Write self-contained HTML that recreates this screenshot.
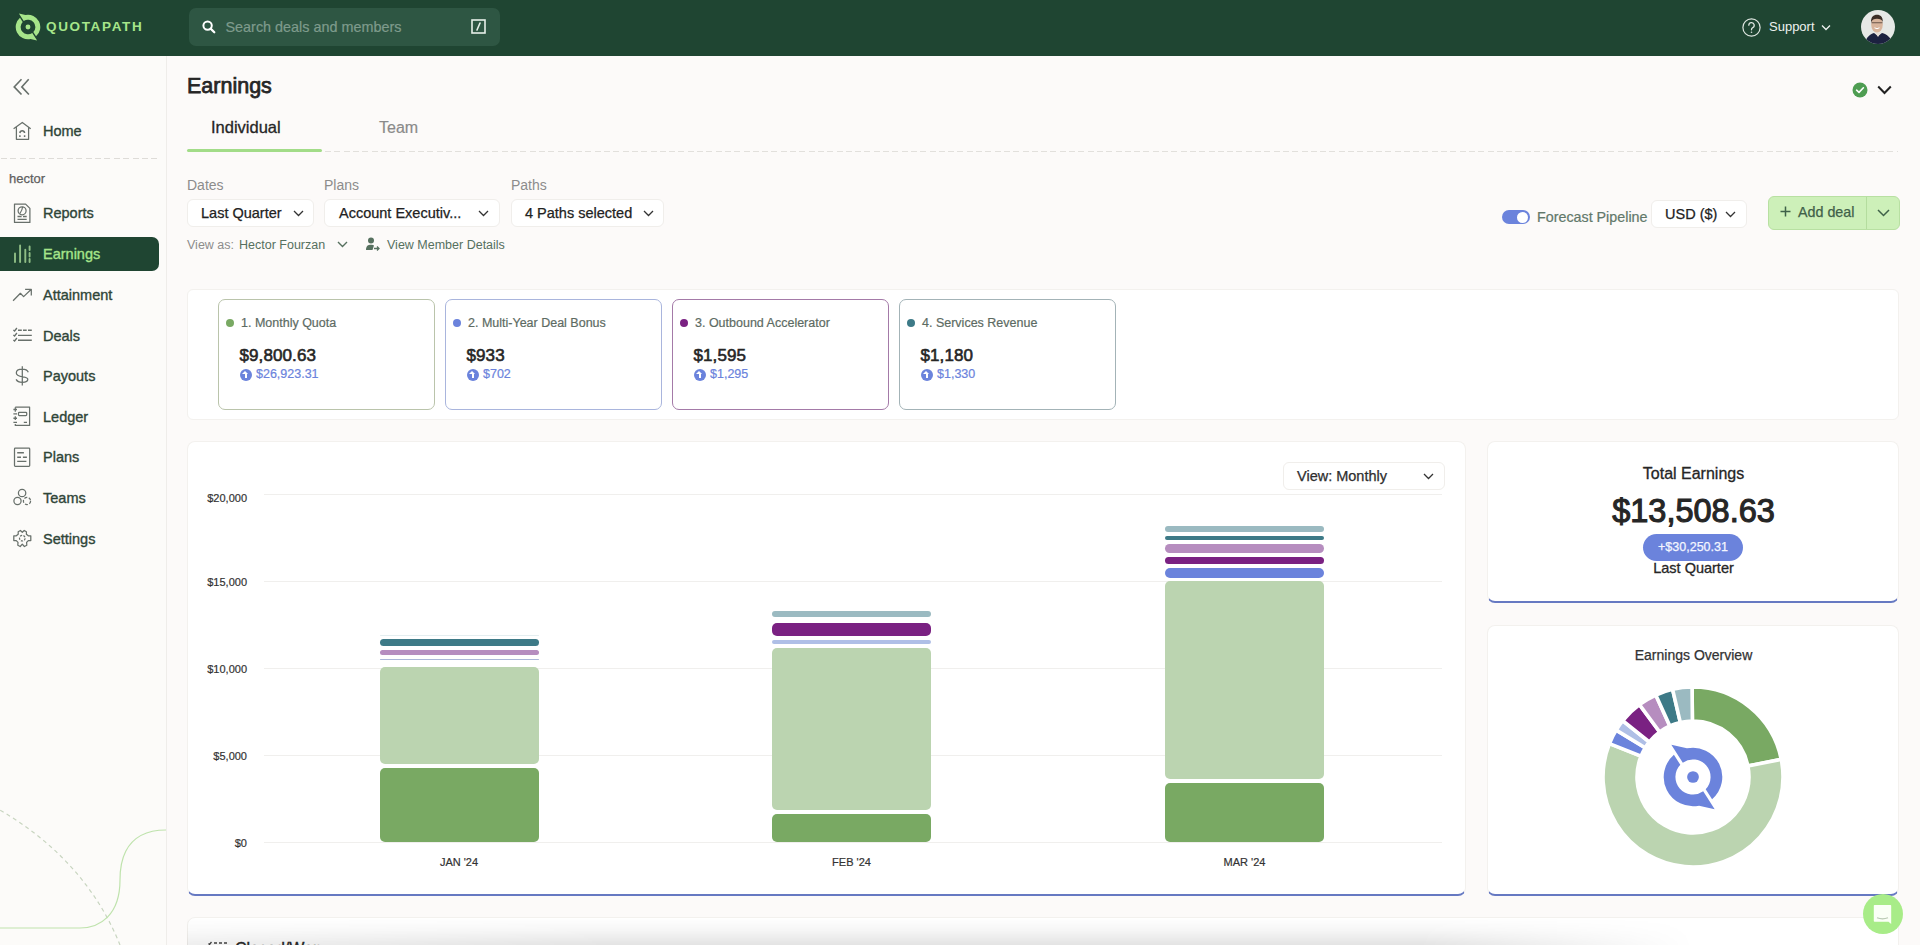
<!DOCTYPE html>
<html><head><meta charset="utf-8">
<style>
*{box-sizing:border-box;margin:0;padding:0}
html,body{width:1920px;height:945px;overflow:hidden;background:#fcfaf9;font-family:"Liberation Sans",sans-serif;color:#222}
.a{position:absolute;white-space:nowrap}
#top{position:absolute;left:0;top:0;width:1920px;height:56px;background:#1f4532}
#side{position:absolute;left:0;top:56px;width:167px;height:889px;background:#fcfbf9;border-right:1px solid #efedea}
.nav{position:absolute;left:43px;font-size:14.5px;color:#2f4538;-webkit-text-stroke:0.35px #2f4538}
.ico{position:absolute;left:12px}
.card{position:absolute;background:#fff;border:1px solid #f3f1ee;border-radius:8px}
.dd{position:absolute;background:#fff;border:1px solid #f0eeeb;border-radius:6px;height:28px}
.lbl{position:absolute;font-size:14px;color:#8c8c8c}
.ddt{position:absolute;font-size:14.5px;color:#222;top:5px;-webkit-text-stroke:0.25px #222}
.chev{position:absolute}
.pc{position:absolute;top:299px;width:217px;height:111px;border-radius:7px;background:#fff;border:1px solid}
.pc .dot{position:absolute;left:7px;top:19px;width:8px;height:8px;border-radius:50%}
.pc .t{position:absolute;left:22px;top:16px;font-size:12.5px;color:#5d6b63;-webkit-text-stroke:0.2px #5d6b63}
.pc .v{position:absolute;left:20.5px;top:46px;font-size:17px;color:#262626;-webkit-text-stroke:0.6px #262626;letter-spacing:0.1px}
.pc .u{position:absolute;left:20.5px;top:68.5px;width:12px;height:12px;border-radius:50%;background:#6b83dc}
.pc .u:after{content:"";position:absolute;left:2.8px;top:2.6px;width:0;height:0;border-left:3.2px solid transparent;border-right:3.2px solid transparent;border-bottom:3.6px solid #fff}
.pc .u:before{content:"";position:absolute;left:5px;top:5.5px;width:2px;height:3.5px;background:#fff}
.pc .s{position:absolute;left:37px;top:67px;font-size:12.5px;color:#6b83dc;-webkit-text-stroke:0.2px #6b83dc}
.yl{position:absolute;font-size:11px;color:#333;text-align:right;width:60px;left:187px;-webkit-text-stroke:0.2px #333}
.gl{position:absolute;left:264px;width:1178px;height:1px;background:#f0efed}
.bar{position:absolute;border-radius:5px}
.xl{position:absolute;font-size:11px;color:#333;text-align:center;width:100px;-webkit-text-stroke:0.2px #333}
</style></head><body>

<!-- TOP BAR -->
<div id="top">
  <svg class="a" style="left:13px;top:12px" width="30" height="30" viewBox="-1.22 -1.22 2.44 2.44"><path fill="#a6e58a" d="M-0.740 -1.100 L-0.208 -0.978 A1.0 1.0 0 0 1 0.652 0.758 L0.433 0.416 A0.6 0.6 0 0 0 -0.348 -0.488 Z"/><path fill="#a6e58a" d="M0.740 1.100 L0.208 0.978 A1.0 1.0 0 0 1 -0.652 -0.758 L-0.433 -0.416 A0.6 0.6 0 0 0 0.348 0.488 Z"/><circle r="0.2" fill="#a6e58a"/></svg>
  <div class="a" style="left:46px;top:19px;font-size:13.5px;font-weight:bold;letter-spacing:1.65px;color:#a6e58a">QUOTAPATH</div>
  <div class="a" style="left:189px;top:8px;width:311px;height:38px;border-radius:7px;background:#2e5643"></div>
  <svg class="a" style="left:202px;top:20px" width="14" height="14" viewBox="0 0 14 14"><circle cx="5.6" cy="5.6" r="4.2" fill="none" stroke="#fff" stroke-width="2"/><path d="M8.6 8.6 L12.3 12.3" stroke="#fff" stroke-width="2.2" stroke-linecap="round"/></svg>
  <div class="a" style="left:225.5px;top:18.5px;font-size:14.4px;color:#7e9b8c;-webkit-text-stroke:0.2px #7e9b8c">Search deals and members</div>
  <svg class="a" style="left:471px;top:19px" width="15" height="15" viewBox="0 0 15 15"><rect x="1" y="1" width="13" height="13" fill="none" stroke="#e6efe9" stroke-width="1.6"/><path d="M9 4 L6 11" stroke="#e6efe9" stroke-width="1.6" stroke-linecap="round"/></svg>
  <svg class="a" style="left:1742px;top:18px" width="19" height="19" viewBox="0 0 19 19"><circle cx="9.5" cy="9.5" r="8.6" fill="none" stroke="#dfe6e1" stroke-width="1.2"/><path d="M6.8 7.2 A2.7 2.7 0 1 1 10.4 9.8 C9.6 10.2 9.5 10.8 9.5 11.8" fill="none" stroke="#dfe6e1" stroke-width="1.3" stroke-linecap="round"/><circle cx="9.5" cy="14.2" r="0.8" fill="#dfe6e1"/></svg>
  <div class="a" style="left:1769px;top:19px;font-size:13px;color:#eef2ef">Support</div>
  <svg class="a" style="left:1821px;top:24px" width="10" height="7" viewBox="0 0 10 7"><path d="M1 1.5 L5 5.5 L9 1.5" fill="none" stroke="#eef2ef" stroke-width="1.3"/></svg>
  <svg class="a" style="left:1861px;top:10px" width="34" height="34" viewBox="0 0 34 34"><defs><clipPath id="av"><circle cx="17" cy="17" r="17"/></clipPath></defs><g clip-path="url(#av)"><rect width="34" height="34" fill="#e6e8e6"/><path d="M4 34 C5 27 9 24.5 13 23 L17 26 L21 23 C26 24.5 30 27 31 34 Z" fill="#1c2140"/><path d="M14 22.5 L17 27 L20 22.5 Z" fill="#e8dcd4"/><ellipse cx="16" cy="14.5" rx="5.8" ry="8" fill="#d8b49c"/><path d="M10 12.5 C9.8 7 12.5 4.8 16 4.8 C19.5 4.8 22 7 21.8 12 C21 9.5 19 8.7 16 8.7 C13 8.7 11 9.5 10 12.5 Z" fill="#3b2d26"/><path d="M10.5 12.8 H21.5" stroke="#6a5548" stroke-width="1.1"/><path d="M13.5 17.8 Q16 19.6 18.5 17.8" fill="none" stroke="#fff" stroke-width="1"/></g></svg>
</div>

<!-- SIDEBAR -->
<div id="side"></div>
<svg class="a" style="left:0;top:0;z-index:2" width="167" height="560" viewBox="0 0 167 560" fill="none" stroke="#68706b" stroke-width="1.25">
<path d="M21.5 79.3 L14.2 86.9 L21.5 94.5 M28.7 79.3 L21.8 86.9 L28.9 94.5" stroke-width="1.6"/>
<path d="M13.6 128.7 L22.3 122.5 L30.7 128.7 M16.4 127 V139.3 H28.6 V127" stroke-linejoin="round"/>
<path d="M19.8 133 Q20.2 130.8 22.2 130.8 Q24.3 130.8 24.6 133 M19.9 135.3 V137 M24.6 135.3 V137" stroke-width="1.5"/>
<path d="M14.5 204.1 H25.6 L29.9 208.4 V222.4 H14.5 Z" stroke-linejoin="round"/>
<circle cx="22.1" cy="210.8" r="4"/><path d="M22.6 206.9 Q22.4 210 19.8 213.6" stroke-width="1.1"/>
<path d="M17.5 216.5 H21.6 M23 216.5 H26.7 M17.5 219.4 H26.7" stroke-width="1.4"/>
<g stroke="#8fbd85" stroke-width="1.9" stroke-linecap="round"><path d="M15 253.5 V262 M20.1 245.5 V262 M25.3 249.8 V262"/><path d="M29.6 246.5 V250 M29.6 253 V256.5 M29.6 259 V262"/></g>
<path d="M13.1 300.7 L20.4 293.3 L23.6 296.6 L31.3 289.3 M25.1 289.3 H31.3 V295.5" stroke-linejoin="round"/>
<path d="M13.4 330 L14.6 331 L16.9 328 M13.4 335 L14.6 336 L16.9 333 M13.4 340 L14.6 341 L16.9 338" stroke-width="1.3"/>
<path d="M18 330.2 H21.8 M23 330.2 H26.7 M28 330.2 H31.8 M18 335.4 H31.8 M18 340.3 H31.8" stroke-width="1.4"/>
<path d="M22.3 366.2 V385.4 M28.3 372.2 C27.3 370 25 369.2 22.3 369.2 C18.5 369.2 16.3 370.8 16.3 373 C16.3 378.2 27.8 375.5 27.8 379.2 C27.8 381.3 25.3 382.3 22.3 382.3 C19.2 382.3 17 381.2 16.1 379.4"/>
<path d="M15.3 407.2 H29.6 V425.4 H15.3 V424 M15.3 420 V416.2 M15.3 411.8 V407.2" stroke-linejoin="round"/>
<path d="M13.4 409.5 H17 M13.4 413.9 H17 M13.4 418.3 H17 M13.4 422.4 H17 M23.8 422.4 H27" stroke-width="1.4"/>
<rect x="18.5" y="412.3" width="8.2" height="3.3" rx="0.8"/>
<rect x="14.5" y="448.2" width="15.2" height="18.2" rx="0.8"/>
<path d="M17.2 452.8 H23.9 M17.2 457.2 H21 M22.9 457.2 H26.9 M17.2 461.4 H26.4" stroke-width="1.4"/>
<circle cx="22.1" cy="493" r="3.7"/><circle cx="17.5" cy="501" r="3.6"/><circle cx="27" cy="501" r="3.6" stroke-dasharray="3 1.6"/>
<path d="M20.4 530.5 L22.3 532.3 L24.2 530.5 L26.4 531.8 L26.4 534.2 L28.3 535.8 L30.8 535.8 L30.8 540.6 L28.3 540.6 L26.6 542.4 L26.8 545.3 L24.4 546.5 L22.3 544.2 L20.2 546.5 L17.8 545.3 L18 542.4 L16.3 540.6 L13.8 540.6 L13.8 535.8 L16.3 535.8 L18.2 534.2 L18.2 531.8 Z" stroke-linejoin="round"/>
<circle cx="22.3" cy="538.2" r="2.8" stroke-dasharray="2.2 1.3" stroke-width="1.2"/>
</svg>
<div class="nav" style="top:123px">Home</div>
<div class="a" style="left:0;top:158px;width:159px;height:1.2px;background:repeating-linear-gradient(to right,transparent 0,transparent 1px,#dedcd8 1px,#dedcd8 7px,transparent 7px,transparent 9.4px)"></div>
<div class="a" style="left:9px;top:171px;font-size:13px;color:#606060;-webkit-text-stroke:0.25px #606060">hector</div>
<div class="nav" style="top:205px">Reports</div>
<div class="a" style="left:0;top:237px;width:159px;height:34px;background:#1f4532;border-radius:0 7px 7px 0"></div>
<div class="nav" style="top:246px;color:#a6e58a;-webkit-text-stroke-color:#a6e58a">Earnings</div>
<div class="nav" style="top:287px">Attainment</div>
<div class="nav" style="top:328px">Deals</div>
<div class="nav" style="top:368px">Payouts</div>
<div class="nav" style="top:409px">Ledger</div>
<div class="nav" style="top:449px">Plans</div>
<div class="nav" style="top:490px">Teams</div>
<div class="nav" style="top:531px">Settings</div>
<svg class="a" style="left:0;top:800px" width="167" height="145" viewBox="0 0 167 145"><path d="M-40 -10 C30 20 90 70 120 145" fill="none" stroke="#c8d5c0" stroke-width="1.2" stroke-dasharray="4 3.5"/><path d="M166 30 C120 30 120 70 120 80 C120 115 100 128 80 128 H0" fill="none" stroke="#bfe3ad" stroke-width="1.2"/></svg>

<!-- MAIN HEADER -->
<div class="a" style="left:187px;top:73.5px;font-size:21.5px;color:#262626;-webkit-text-stroke:0.75px #262626">Earnings</div>
<svg class="a" style="left:1852px;top:82px" width="16" height="16" viewBox="0 0 16 16"><circle cx="8" cy="8" r="7.5" fill="#4e9d52"/><path d="M4.6 8.2 L7 10.4 L11.4 5.8" fill="none" stroke="#fff" stroke-width="1.6" stroke-linecap="round" stroke-linejoin="round"/></svg>
<svg class="a" style="left:1877px;top:85px" width="15" height="10" viewBox="0 0 15 10"><path d="M1.2 1.5 L7.5 8 L13.8 1.5" fill="none" stroke="#222" stroke-width="2"/></svg>
<div class="a" style="left:211px;top:118px;font-size:16.5px;color:#262626;-webkit-text-stroke:0.3px #262626">Individual</div>
<div class="a" style="left:379px;top:119px;font-size:16px;color:#8a8a8a;-webkit-text-stroke:0.2px #8a8a8a">Team</div>
<div class="a" style="left:325px;top:151px;width:1573px;height:1.2px;background:repeating-linear-gradient(to right,#e2e0dc 0,#e2e0dc 6px,transparent 6px,transparent 9.3px)"></div>
<div class="a" style="left:187px;top:148.5px;width:135px;height:3px;background:#a2dc88;border-radius:2px"></div>

<!-- FILTERS -->
<div class="lbl" style="left:187px;top:177px">Dates</div>
<div class="lbl" style="left:324px;top:177px">Plans</div>
<div class="lbl" style="left:511px;top:177px">Paths</div>
<div class="dd" style="left:187px;top:199px;width:127px"><div class="ddt" style="left:13px">Last Quarter</div>
<svg class="chev" style="left:105px;top:10px" width="11" height="7" viewBox="0 0 11 7"><path d="M1 1 L5.5 5.5 L10 1" fill="none" stroke="#333" stroke-width="1.3"/></svg></div>
<div class="dd" style="left:324px;top:199px;width:176px"><div class="ddt" style="left:14px">Account Executiv...</div>
<svg class="chev" style="left:153px;top:10px" width="11" height="7" viewBox="0 0 11 7"><path d="M1 1 L5.5 5.5 L10 1" fill="none" stroke="#333" stroke-width="1.3"/></svg></div>
<div class="dd" style="left:511px;top:199px;width:153px"><div class="ddt" style="left:13px">4 Paths selected</div>
<svg class="chev" style="left:131px;top:10px" width="11" height="7" viewBox="0 0 11 7"><path d="M1 1 L5.5 5.5 L10 1" fill="none" stroke="#333" stroke-width="1.3"/></svg></div>
<div class="a" style="left:187px;top:238px;font-size:12.5px;color:#8c8c8c">View as:</div>
<div class="a" style="left:239px;top:238px;font-size:12.5px;color:#56705f">Hector Fourzan</div>
<svg class="a" style="left:337px;top:241px" width="11" height="7" viewBox="0 0 11 7"><path d="M1 1 L5.5 5.5 L10 1" fill="none" stroke="#56705f" stroke-width="1.4"/></svg>
<svg class="a" style="left:365px;top:237px" width="15" height="14" viewBox="0 0 15 14"><circle cx="6" cy="3.6" r="3" fill="#56705f"/><path d="M1 13 C1 9 3 7.8 6 7.8 C7.5 7.8 8.5 8.2 9 8.6 L7.5 13 Z" fill="#56705f"/><path d="M9 11.5 H14 M12 9.5 L14 11.5 L12 13.5" fill="none" stroke="#56705f" stroke-width="1.3"/></svg>
<div class="a" style="left:387px;top:238px;font-size:12.5px;color:#56705f">View Member Details</div>

<!-- RIGHT CONTROLS -->
<div class="a" style="left:1502px;top:210px;width:28px;height:14px;border-radius:7px;background:#6b83dc"></div>
<div class="a" style="left:1517px;top:211.5px;width:11px;height:11px;border-radius:50%;background:#fff"></div>
<div class="a" style="left:1537px;top:209px;font-size:14.3px;color:#62786a;-webkit-text-stroke:0.2px #62786a">Forecast Pipeline</div>
<div class="dd" style="left:1651px;top:200px;width:96px"><div class="ddt" style="left:13px">USD ($)</div>
<svg class="chev" style="left:73px;top:10px" width="11" height="7" viewBox="0 0 11 7"><path d="M1 1 L5.5 5.5 L10 1" fill="none" stroke="#333" stroke-width="1.3"/></svg></div>
<div class="a" style="left:1768px;top:196px;width:132px;height:34px;border-radius:6px;background:#cdf0b9;border:1px solid #b8e0a2"></div>
<div class="a" style="left:1866px;top:197px;width:1px;height:32px;background:#b4dd9e"></div>
<svg class="a" style="left:1780px;top:206px" width="11" height="11" viewBox="0 0 11 11"><path d="M5.5 0.5 V10.5 M0.5 5.5 H10.5" stroke="#3f6149" stroke-width="1.5"/></svg>
<div class="a" style="left:1798px;top:204px;font-size:14.3px;color:#3f6149;-webkit-text-stroke:0.25px #3f6149">Add deal</div>
<svg class="a" style="left:1877px;top:209px" width="13" height="8" viewBox="0 0 13 8"><path d="M1 1 L6.5 6.5 L12 1" fill="none" stroke="#3f6149" stroke-width="1.5"/></svg>

<!-- PLAN CARDS -->
<div class="card" style="left:187px;top:289px;width:1712px;height:131px;border-radius:6px"></div>
<div class="pc" style="left:218px;border-color:#bac4ab"><div class="dot" style="background:#79a963"></div><div class="t">1. Monthly Quota</div><div class="v">$9,800.63</div><div class="u"></div><div class="s">$26,923.31</div></div>
<div class="pc" style="left:445px;border-color:#a9b5dd"><div class="dot" style="background:#6b83dc"></div><div class="t">2. Multi-Year Deal Bonus</div><div class="v">$933</div><div class="u"></div><div class="s">$702</div></div>
<div class="pc" style="left:672px;border-color:#a47aa8"><div class="dot" style="background:#7a2182"></div><div class="t">3. Outbound Accelerator</div><div class="v">$1,595</div><div class="u"></div><div class="s">$1,295</div></div>
<div class="pc" style="left:899px;border-color:#a3b3b7"><div class="dot" style="background:#3d7a87"></div><div class="t">4. Services Revenue</div><div class="v">$1,180</div><div class="u"></div><div class="s">$1,330</div></div>

<!-- CHART CARD -->
<div class="card" style="left:187px;top:441px;width:1279px;height:455px;border-bottom:2.5px solid #6679c2"></div>
<div class="dd" style="left:1283px;top:462px;width:162px"><div class="ddt" style="left:13px;color:#333">View: Monthly</div>
<svg class="chev" style="left:139px;top:10px" width="11" height="7" viewBox="0 0 11 7"><path d="M1 1 L5.5 5.5 L10 1" fill="none" stroke="#333" stroke-width="1.3"/></svg></div>
<div class="gl" style="top:494px"></div>
<div class="gl" style="top:581px"></div>
<div class="gl" style="top:668px"></div>
<div class="gl" style="top:755px"></div>
<div class="gl" style="top:842px"></div>
<div class="yl" style="top:492px">$20,000</div>
<div class="yl" style="top:576px">$15,000</div>
<div class="yl" style="top:663px">$10,000</div>
<div class="yl" style="top:750px">$5,000</div>
<div class="yl" style="top:837px">$0</div>

<!-- JAN -->
<div class="bar" style="left:379.5px;top:635px;width:159px;height:1px;background:#e4eef0;border-radius:1px"></div>
<div class="bar" style="left:379.5px;top:639px;width:159px;height:7px;background:#3d7a87"></div>
<div class="bar" style="left:379.5px;top:650px;width:159px;height:5px;background:#b68dbf"></div>
<div class="bar" style="left:379.5px;top:658.5px;width:159px;height:1.7px;background:#aab7d8"></div>
<div class="bar" style="left:379.5px;top:667px;width:159px;height:97px;background:#bbd4b0"></div>
<div class="bar" style="left:379.5px;top:768px;width:159px;height:73.5px;background:#79a963"></div>
<div class="xl" style="left:409px;top:856px">JAN '24</div>
<!-- FEB -->
<div class="bar" style="left:772px;top:611px;width:159px;height:5.5px;background:#9bbac1"></div>
<div class="bar" style="left:772px;top:623px;width:159px;height:13px;background:#7a2182"></div>
<div class="bar" style="left:772px;top:640px;width:159px;height:3.5px;background:#afbfe6"></div>
<div class="bar" style="left:772px;top:647.5px;width:159px;height:162px;background:#bbd4b0"></div>
<div class="bar" style="left:772px;top:814px;width:159px;height:27.5px;background:#79a963"></div>
<div class="xl" style="left:801.5px;top:856px">FEB '24</div>
<!-- MAR -->
<div class="bar" style="left:1165px;top:526px;width:159px;height:6px;background:#9bbac1"></div>
<div class="bar" style="left:1165px;top:536px;width:159px;height:3.7px;background:#3d7a87"></div>
<div class="bar" style="left:1165px;top:544px;width:159px;height:9px;background:#b68dbf"></div>
<div class="bar" style="left:1165px;top:557px;width:159px;height:7px;background:#7a2182"></div>
<div class="bar" style="left:1165px;top:568px;width:159px;height:9.5px;background:#6b83dc"></div>
<div class="bar" style="left:1165px;top:581px;width:159px;height:197.5px;background:#bbd4b0"></div>
<div class="bar" style="left:1165px;top:783px;width:159px;height:58.5px;background:#79a963"></div>
<div class="xl" style="left:1194.5px;top:856px">MAR '24</div>

<!-- TOTAL EARNINGS -->
<div class="card" style="left:1487px;top:441px;width:412px;height:162px;border-bottom:2.5px solid #6679c2"></div>
<div class="a" style="left:1488px;top:465px;width:411px;text-align:center;font-size:16px;color:#262626;-webkit-text-stroke:0.3px #262626">Total Earnings</div>
<div class="a" style="left:1488px;top:493px;width:411px;text-align:center;font-size:32.5px;color:#262626;-webkit-text-stroke:1.1px #262626">$13,508.63</div>
<div class="a" style="left:1643px;top:534px;width:100px;height:27px;border-radius:14px;background:#6b83dc;color:#f4f6ff;font-size:12.5px;text-align:center;line-height:27px;-webkit-text-stroke:0.25px #f4f6ff">+$30,250.31</div>
<div class="a" style="left:1488px;top:560px;width:411px;text-align:center;font-size:14.5px;color:#262626;-webkit-text-stroke:0.3px #262626">Last Quarter</div>

<!-- EARNINGS OVERVIEW -->
<div class="card" style="left:1487px;top:625px;width:412px;height:271px;border-bottom:2.5px solid #6679c2"></div>
<div class="a" style="left:1488px;top:647px;width:411px;text-align:center;font-size:14px;color:#333;-webkit-text-stroke:0.25px #333">Earnings Overview</div>
<svg id="donut" class="a" style="left:1593px;top:677px" width="200" height="200" viewBox="-100 -100 200 200"><path d="M-0.94 -90.00 A90 90 0 0 1 88.26 -17.64 L54.91 -10.97 A56 56 0 0 0 -0.59 -56.00 Z" fill="#79a963" stroke="#fff" stroke-width="3.6" stroke-linejoin="miter"/><path d="M88.26 -17.64 A90 90 0 1 1 -83.56 -33.42 L-52.00 -20.80 A56 56 0 1 0 54.91 -10.97 Z" fill="#bbd4b0" stroke="#fff" stroke-width="3.6" stroke-linejoin="miter"/><path d="M-83.56 -33.42 A90 90 0 0 1 -76.82 -46.89 L-47.80 -29.18 A56 56 0 0 0 -52.00 -20.80 Z" fill="#6b83dc" stroke="#fff" stroke-width="3.6" stroke-linejoin="miter"/><path d="M-76.82 -46.89 A90 90 0 0 1 -70.24 -56.27 L-43.70 -35.01 A56 56 0 0 0 -47.80 -29.18 Z" fill="#afbfe6" stroke="#fff" stroke-width="3.6" stroke-linejoin="miter"/><path d="M-70.24 -56.27 A90 90 0 0 1 -53.53 -72.35 L-33.31 -45.02 A56 56 0 0 0 -43.70 -35.01 Z" fill="#7a2182" stroke="#fff" stroke-width="3.6" stroke-linejoin="miter"/><path d="M-53.53 -72.35 A90 90 0 0 1 -37.18 -81.96 L-23.13 -51.00 A56 56 0 0 0 -33.31 -45.02 Z" fill="#b68dbf" stroke="#fff" stroke-width="3.6" stroke-linejoin="miter"/><path d="M-37.18 -81.96 A90 90 0 0 1 -20.40 -87.66 L-12.69 -54.54 A56 56 0 0 0 -23.13 -51.00 Z" fill="#3d7a87" stroke="#fff" stroke-width="3.6" stroke-linejoin="miter"/><path d="M-20.40 -87.66 A90 90 0 0 1 -0.94 -90.00 L-0.59 -56.00 A56 56 0 0 0 -12.69 -54.54 Z" fill="#9bbac1" stroke="#fff" stroke-width="3.6" stroke-linejoin="miter"/><g transform="scale(29.3)"><path fill="#6b83dc" d="M-0.740 -1.100 L-0.208 -0.978 A1.0 1.0 0 0 1 0.652 0.758 L0.433 0.416 A0.6 0.6 0 0 0 -0.348 -0.488 Z"/><path fill="#6b83dc" d="M0.740 1.100 L0.208 0.978 A1.0 1.0 0 0 1 -0.652 -0.758 L-0.433 -0.416 A0.6 0.6 0 0 0 0.348 0.488 Z"/><circle r="0.2" fill="#6b83dc"/></g></svg>

<!-- BOTTOM CARD + FADE -->
<div class="card" style="left:187px;top:917px;width:1712px;height:80px"></div>
<svg class="a" style="left:208px;top:941px" width="20" height="10" viewBox="0 0 20 10"><path d="M0.5 2.5 L1.5 3.5 L3.5 1 M6 2 H9 M11 2 H14 M16 2 H19" fill="none" stroke="#444" stroke-width="1.3"/></svg>
<div class="a" style="left:235px;top:939.5px;font-size:16px;color:#262626;-webkit-text-stroke:0.4px #262626">Closed/Won</div>
<div class="a" style="left:187px;top:918px;width:1712px;height:27px;background:linear-gradient(to bottom,rgba(0,0,0,0) 0%,rgba(0,0,0,0.035) 45%,rgba(0,0,0,0.11) 100%);-webkit-mask-image:linear-gradient(to right,rgba(0,0,0,0.6) 0%,#000 25%,#000 72%,rgba(0,0,0,0) 88%)"></div>
<div class="a" style="left:1862.5px;top:893.8px;width:40px;height:40px;border-radius:50%;background:#a8ec88"></div>
<svg class="a" style="left:1873px;top:903.5px" width="19" height="21" viewBox="0 0 19 21"><path d="M1.5 1 H17.5 Q18.2 1 18.2 1.7 V20 L15.5 17.8 H1.5 Q0.8 17.8 0.8 17.1 V1.7 Q0.8 1 1.5 1 Z" fill="#fafff6"/><path d="M4 13.8 Q9.5 16 15 13.8" fill="none" stroke="#b9c9b3" stroke-width="1.2"/></svg>
</body></html>
